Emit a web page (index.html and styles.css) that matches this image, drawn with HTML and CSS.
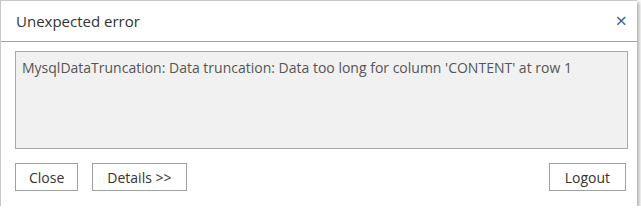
FILE: index.html
```html
<!DOCTYPE html>
<html lang="en">
<head>
    <meta charset="UTF-8">
    <title>Unexpected error</title>
    <link rel="stylesheet" href="styles.css">
</head>
<body>
    <div class="dialog">
        <div class="dialog-header">
            <span class="dialog-title">Unexpected error</span>
            <span class="dialog-close">&times;</span>
        </div>
        <div class="dialog-body">
            <div class="message">MysqlDataTruncation: Data truncation: Data too long for column 'CONTENT' at row 1</div>
        </div>
        <div class="dialog-footer">
            <button class="button">Close</button>
            <button class="button details">Details &gt;&gt;</button>
            <button class="button logout">Logout</button>
        </div>
    </div>
</body>
</html>
```

FILE: styles.css
```css
body {
    margin: 0;
    padding: 0;
    background-color: #fff;
    font-family: 'Open Sans', 'Noto Sans', sans-serif;
}
.dialog {
    width: 636px;
    height: 205px;
    border: 1px solid #c8c8c8;
    border-right: none;
    border-bottom: none;
    background-color: #fff;
    box-shadow: 2px 2px 4px rgba(0, 0, 0, 0.35);
    display: flex;
    flex-direction: column;
}
.dialog-header {
    height: 40px;
    border-bottom: 1px solid #a0a0a0;
    display: flex;
    align-items: center;
    justify-content: space-between;
    padding: 0 10px 0 15px;
}
.dialog-title {
    font-size: 15px;
    color: #333;
}
.dialog-close {
    font-size: 20px;
    color: #3a5f8a;
    line-height: 1;
}
.dialog-body {
    padding: 9px 9px 0 14px;
}
.message {
    height: 84px;
    padding: 6px 6px;
    background-color: #f1f1f1;
    border: 1px solid #a8a8a8;
    font-size: 14px;
    color: #555;
    line-height: 19px;
}
.dialog-footer {
    display: flex;
    gap: 14px;
    padding: 14px 11px 0 14px;
}
.button {
    height: 28px;
    padding: 0 13px;
    background-color: #fff;
    border: 1px solid #a0a0a0;
    font-family: 'Open Sans', 'Noto Sans', sans-serif;
    font-size: 14px;
    color: #333;
    cursor: pointer;
}
.details {
    padding: 0 14px;
}
.logout {
    margin-left: auto;
    padding: 0 15px;
}
```
